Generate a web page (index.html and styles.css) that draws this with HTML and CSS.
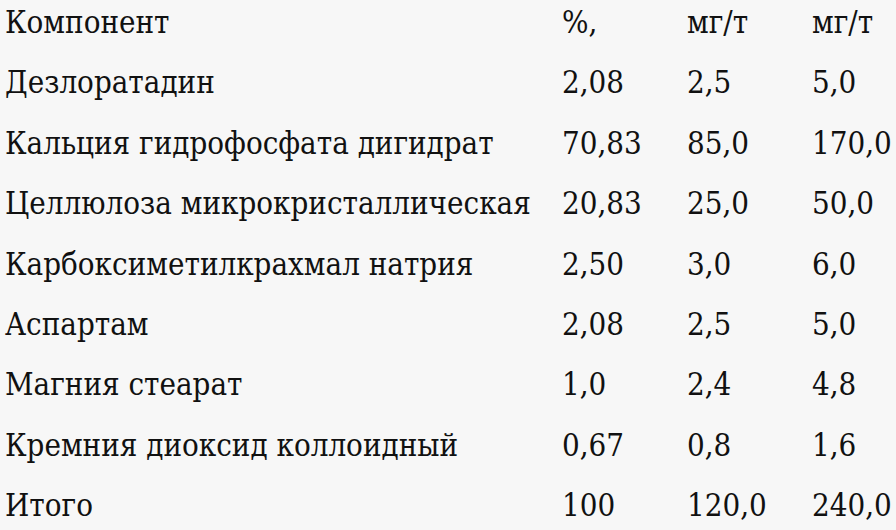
FILE: index.html
```html
<!DOCTYPE html>
<html lang="ru">
<head>
<meta charset="utf-8">
<link rel="stylesheet" href="styles.css">
</head>
<body>
<div class="table">
  <div class="row"><span>Компонент</span><span>%,</span><span>мг/т</span><span>мг/т</span></div>
  <div class="row"><span>Дезлоратадин</span><span>2,08</span><span>2,5</span><span>5,0</span></div>
  <div class="row"><span>Кальция гидрофосфата дигидрат</span><span>70,83</span><span>85,0</span><span>170,0</span></div>
  <div class="row"><span>Целлюлоза микрокристаллическая</span><span>20,83</span><span>25,0</span><span>50,0</span></div>
  <div class="row"><span>Карбоксиметилкрахмал натрия</span><span>2,50</span><span>3,0</span><span>6,0</span></div>
  <div class="row"><span>Аспартам</span><span>2,08</span><span>2,5</span><span>5,0</span></div>
  <div class="row"><span>Магния стеарат</span><span>1,0</span><span>2,4</span><span>4,8</span></div>
  <div class="row"><span>Кремния диоксид коллоидный</span><span>0,67</span><span>0,8</span><span>1,6</span></div>
  <div class="row"><span>Итого</span><span>100</span><span>120,0</span><span>240,0</span></div>
</div>
</body>
</html>
```
FILE: styles.css
```css
html, body {
  margin: 0;
  padding: 0;
  background: #f7f7f7;
}
body {
  width: 896px;
  height: 530px;
  overflow: hidden;
  font-family: "DejaVu Serif Condensed", "DejaVu Serif", serif;
  font-stretch: condensed;
  font-size: 31px;
  color: #111;
}
.table {
  padding-left: 5px;
}
.row {
  display: grid;
  grid-template-columns: 557px 125px 125px auto;
  height: 60.4px;
  box-sizing: border-box;
  padding-top: 7px;
  line-height: 31px;
  white-space: nowrap;
}
```
